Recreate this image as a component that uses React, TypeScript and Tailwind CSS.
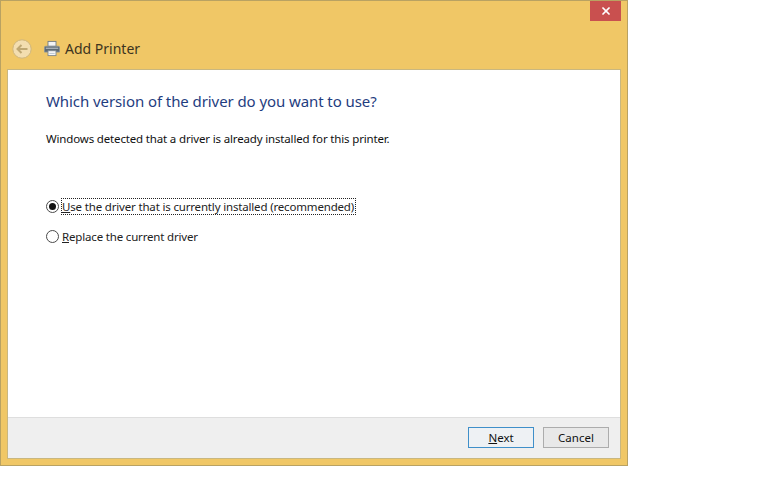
import { X } from "lucide-react";

// small printer glyph from the wizard title bar
function PrinterIcon() {
  return (
    <svg width="16" height="17" viewBox="0 0 18 18" className="shrink-0">
      <rect x="4.5" y="1" width="9" height="5.5" fill="#f4f4f4" stroke="#6f7a82" />
      <path d="M2 6.5h14a1.5 1.5 0 0 1 1.5 1.5v5h-17V8A1.5 1.5 0 0 1 2 6.5z" fill="#5d6a73" stroke="#8b959c" />
      <rect x="2" y="8" width="14" height="1.5" fill="#aab3b9" />
      <rect x="4.5" y="11.5" width="9" height="5.5" fill="#f7f7f7" stroke="#7d878e" />
      <rect x="6" y="14" width="6" height="1" fill="#b5c4d0" />
    </svg>
  );
}

function BackButton() {
  return (
    <svg width="20" height="20" viewBox="0 0 20 20" className="shrink-0">
      <circle cx="10" cy="10" r="9.2" fill="#f3deb0" stroke="#cfb67c" />
      <path d="M15.5 10H6M9.5 6L5.5 10l4 4" fill="none" stroke="#bfa873" strokeWidth="2" />
    </svg>
  );
}

function Radio({ checked }: { checked?: boolean }) {
  return (
    <span className="flex h-[13px] w-[13px] shrink-0 items-center justify-center rounded-full border border-[#4a4a4a] bg-white">
      {checked && <span className="h-[7px] w-[7px] rounded-full bg-[#111]" />}
    </span>
  );
}

export default function App() {
  return (
    <div className="h-[480px] w-[768px] bg-white font-['Noto_Sans','Open_Sans',sans-serif]">
      <div className="flex h-[466px] w-[628px] flex-col border border-[#b9a262] bg-[#f0c766] px-[6px] pb-[6px]">
        <div className="flex h-[20px] justify-end">
          <div className="flex h-[20px] w-[31px] items-center justify-center bg-[#c9504f]">
            <X size={12} strokeWidth={3.5} className="text-white" />
          </div>
        </div>
        <div className="flex h-[48px] items-center pl-[5px] pt-[7px]">
          <BackButton />
          <div className="ml-[12px]">
            <PrinterIcon />
          </div>
          <span className="ml-[5px] text-[14px] text-[#3d3420]">Add Printer</span>
        </div>
        <div className="flex min-h-0 flex-1 flex-col border border-[#c9b77f] bg-white">
          <div className="flex-1 pl-[38px] pt-[19px]">
            <h1 className="text-[15px] leading-[24px] tracking-[-0.08px] text-[#1f3d80]">
              Which version of the driver do you want to use?
            </h1>
            <p className="mt-[18px] text-[11.5px] leading-[16px] tracking-[-0.16px] text-[#111]">
              Windows detected that a driver is already installed for this printer.
            </p>
            <div className="mt-[51px] flex items-center">
              <Radio checked />
              <span className="ml-[2px] border border-dotted border-[#222] pl-0 pr-[1px] text-[11.5px] leading-[15px] tracking-[-0.17px] text-[#222]">
                <u>U</u>se the driver that is currently installed (recommended)
              </span>
            </div>
            <div className="mt-[14px] flex items-center">
              <Radio />
              <span className="ml-[3px] pr-[1px] text-[11.5px] leading-[15px] tracking-[-0.17px] text-[#222]">
                <u>R</u>eplace the current driver
              </span>
            </div>
          </div>
          <div className="flex h-[41px] items-start justify-end gap-[9px] border-t border-[#dedede] bg-[#efefef] pr-[11px] pt-[9px]">
            <button className="h-[21px] w-[66px] border border-[#3f8fc9] bg-[#eef1f4] pt-[1px] text-[11.5px] leading-none text-[#111]">
              <u>N</u>ext
            </button>
            <button className="h-[21px] w-[66px] border border-[#acacac] bg-[#e8e8e8] pt-[1px] text-[11.5px] leading-none text-[#111]">
              Cancel
            </button>
          </div>
        </div>
      </div>
    </div>
  );
}
